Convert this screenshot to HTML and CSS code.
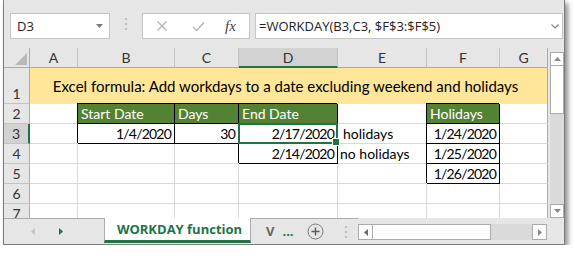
FILE: index.html
```html
<!DOCTYPE html>
<html lang="en">
<head>
    <meta charset="UTF-8">
    <title>WORKDAY function</title>
    <link rel="stylesheet" href="styles.css">
</head>
<body>
    <div class="window">
        <!-- Formula bar -->
        <div class="formula-bar">
            <div class="name-box">
                <span>D3</span>
                <svg class="caret" width="7" height="4" viewBox="0 0 7 4"><path d="M0 0h7L3.5 4z" fill="#7a7a7a"/></svg>
            </div>
            <div class="grip"><i></i><i></i><i></i></div>
            <div class="fx-box">
                <svg width="12" height="12" viewBox="0 0 12 12"><path d="M1.5 1.5l9 9M10.5 1.5l-9 9" stroke="#b4b4b4" stroke-width="1.3"/></svg>
                <svg width="13" height="11" viewBox="0 0 13 11"><path d="M1 6l3.5 3.5L12 1.5" stroke="#b4b4b4" stroke-width="1.4" fill="none"/></svg>
                <span class="fx">fx</span>
            </div>
            <div class="formula">
                <span>=WORKDAY(B3,C3, $F$3:$F$5)</span>
                <svg width="8" height="5" viewBox="0 0 8 5"><path d="M0.5 0.5L4 4l3.5-3.5" stroke="#8a8a8a" stroke-width="1.2" fill="none"/></svg>
            </div>
        </div>

        <!-- Sheet -->
        <div class="sheet">
            <div class="grid">
                <div class="corner"><svg width="12" height="12" viewBox="0 0 12 12"><path d="M12 0v12H0z" fill="#b9b9b9"/></svg></div>
                <div class="col-head">A</div>
                <div class="col-head">B</div>
                <div class="col-head">C</div>
                <div class="col-head active">D</div>
                <div class="col-head">E</div>
                <div class="col-head">F</div>
                <div class="col-head last">G</div>

                <div class="row-head">1</div>
                <div class="title">Excel formula: Add workdays to a date excluding weekend and holidays</div>

                <div class="row-head">2</div>
                <div class="cell"></div>
                <div class="cell head box">Start Date</div>
                <div class="cell head box">Days</div>
                <div class="cell head box">End Date</div>
                <div class="cell"></div>
                <div class="cell head box">Holidays</div>
                <div class="cell last"></div>

                <div class="row-head active">3</div>
                <div class="cell"></div>
                <div class="cell num box">1/4/2020</div>
                <div class="cell num box">30</div>
                <div class="cell num box selected">2/17/2020</div>
                <div class="cell indent">holidays</div>
                <div class="cell num box">1/24/2020</div>
                <div class="cell last"></div>

                <div class="row-head">4</div>
                <div class="cell"></div>
                <div class="cell"></div>
                <div class="cell"></div>
                <div class="cell num box">2/14/2020</div>
                <div class="cell">no holidays</div>
                <div class="cell num box">1/25/2020</div>
                <div class="cell last"></div>

                <div class="row-head">5</div>
                <div class="cell"></div>
                <div class="cell"></div>
                <div class="cell"></div>
                <div class="cell"></div>
                <div class="cell"></div>
                <div class="cell num box">1/26/2020</div>
                <div class="cell last"></div>

                <div class="row-head">6</div>
                <div class="cell"></div>
                <div class="cell"></div>
                <div class="cell"></div>
                <div class="cell"></div>
                <div class="cell"></div>
                <div class="cell"></div>
                <div class="cell last"></div>

                <div class="row-head">7</div>
                <div class="cell"></div>
                <div class="cell"></div>
                <div class="cell"></div>
                <div class="cell"></div>
                <div class="cell"></div>
                <div class="cell"></div>
                <div class="cell last"></div>
            </div>

            <div class="vscroll-col">
                <div class="vscroll">
                    <div class="sb-btn"><svg width="7" height="4" viewBox="0 0 7 4"><path d="M0 4h7L3.5 0z" fill="#8a8a8a"/></svg></div>
                    <div class="sb-thumb"></div>
                    <div class="sb-track"></div>
                    <div class="sb-btn"><svg width="7" height="4" viewBox="0 0 7 4"><path d="M0 0h7L3.5 4z" fill="#8a8a8a"/></svg></div>
                </div>
            </div>
        </div>

        <!-- Sheet tabs -->
        <div class="tab-bar">
            <div class="tab-nav">
                <svg width="4" height="7" viewBox="0 0 4 7"><path d="M4 0v7L0 3.5z" fill="#c4c4c4"/></svg>
                <svg width="4" height="7" viewBox="0 0 4 7"><path d="M0 0v7l4-3.5z" fill="#217346"/></svg>
            </div>
            <div class="tab active">WORKDAY function</div>
            <div class="tab more"><span class="v">V</span><span class="dots">...</span></div>
            <div class="add-sheet">
                <svg width="17" height="17" viewBox="0 0 17 17"><circle cx="8.5" cy="8.5" r="7.5" stroke="#7a7a7a" fill="none"/><path d="M8.5 4.5v8M4.5 8.5h8" stroke="#5a5a5a" stroke-width="1.4"/></svg>
            </div>
            <div class="grip tab-grip"><i></i><i></i><i></i></div>
            <div class="hscroll">
                <div class="sb-btn"><svg width="4" height="7" viewBox="0 0 4 7"><path d="M4 0v7L0 3.5z" fill="#6a6a6a"/></svg></div>
                <div class="sb-thumb"></div>
                <div class="sb-track"></div>
                <div class="sb-btn"><svg width="4" height="7" viewBox="0 0 4 7"><path d="M0 0v7l4-3.5z" fill="#8a8a8a"/></svg></div>
            </div>
        </div>
    </div>
</body>
</html>
```

FILE: styles.css
```css
/* Reset */
* {
    box-sizing: border-box;
    margin: 0;
    padding: 0;
}

body {
    background: #fff;
    font-family: Lato, "Liberation Sans", sans-serif;
    color: #000;
}

/* Window frame */
.window {
    margin-left: 3px;
    width: 562px;
    height: 245px;
    border: 1px solid #7c7c7c;
    border-top: none;
    background: #e6e6e6;
    box-shadow: 3px 3px 5px rgba(0, 0, 0, 0.45);
    overflow: hidden;
}

/* Formula bar */
.formula-bar {
    height: 48px;
    display: flex;
    align-items: flex-start;
    padding-top: 13px;
    font-family: "Open Sans", "Noto Sans", sans-serif;
    font-size: 13px;
    color: #222;
}

.name-box {
    margin-left: 6px;
    width: 100px;
    height: 26px;
    background: #fff;
    border: 1px solid #c6c6c6;
    display: flex;
    align-items: center;
    justify-content: space-between;
    padding: 0 6px 0 6px;
}

.grip {
    display: flex;
    flex-direction: column;
    gap: 3px;
    padding-top: 5px;
}

.grip i {
    display: block;
    width: 2px;
    height: 2px;
    background: #bdbdbd;
}

.formula-bar .grip {
    margin: 0 15px 0 15px;
}

.fx-box {
    width: 108px;
    height: 26px;
    background: #fff;
    border: 1px solid #c6c6c6;
    display: flex;
    align-items: center;
    padding-left: 13px;
    gap: 24px;
}

.fx {
    font-family: "Liberation Serif", serif;
    font-style: italic;
    font-size: 15px;
    color: #444;
    margin-left: -4px;
}

.formula {
    flex: 1;
    margin-left: 5px;
    margin-right: 1px;
    height: 26px;
    background: #fff;
    border: 1px solid #c6c6c6;
    display: flex;
    align-items: center;
    justify-content: space-between;
    padding: 0 3px 0 3px;
}

/* Sheet grid */
.sheet {
    display: flex;
    height: 170px;
}

.grid {
    width: 544px;
    height: 170px;
    overflow: hidden;
    display: grid;
    grid-template-columns: 26px 48px 97px 64px 99px 89px 73px 48px;
    grid-template-rows: 20px 36px repeat(6, 20px);
    background: #fff;
    font-size: 14px;
}

.corner {
    background: #e6e6e6;
    border-right: 1px solid #ababab;
    border-bottom: 1px solid #ababab;
    display: flex;
    align-items: flex-end;
    justify-content: flex-end;
    padding: 0 2px 2px 0;
}

.col-head {
    background: #e6e6e6;
    border-right: 1px solid #c3c3c3;
    border-bottom: 1px solid #ababab;
    display: flex;
    align-items: center;
    justify-content: center;
    color: #333;
    font-size: 14px;
}

.col-head.active {
    background: #d2d2d2;
    border-bottom: 2px solid #217346;
}

.col-head.last {
    border-right-color: #ababab;
}

.row-head {
    background: #e6e6e6;
    border-right: 1px solid #ababab;
    border-bottom: 1px solid #c3c3c3;
    display: flex;
    align-items: flex-end;
    justify-content: center;
    color: #333;
    padding-bottom: 1px;
    line-height: 17px;
}

.row-head.active {
    background: #d2d2d2;
    border-right: 2px solid #217346;
}

.title {
    grid-column: 2 / span 7;
    background: #ffe699;
    border-right: 1px solid #ababab;
    display: flex;
    align-items: center;
    justify-content: center;
    font-size: 15px;
    padding-right: 6px;
}

.cell {
    border-right: 1px solid #d9d9d9;
    border-bottom: 1px solid #d9d9d9;
    display: flex;
    align-items: flex-end;
    padding: 0 2px 1px 2px;
    line-height: 17px;
    white-space: nowrap;
}

.cell.last {
    border-right-color: #ababab;
}

.cell.num {
    justify-content: flex-end;
    letter-spacing: -0.8px;
    padding-right: 3px;
}

.cell.indent {
    padding-left: 5px;
}

.cell.box {
    border-right-color: #000;
    border-bottom-color: #000;
    box-shadow: -1px -1px 0 #000;
}

.cell.head {
    background: #548235;
    color: #fff;
    padding-left: 3px;
}

/* Active cell outline with fill handle */
.cell.selected {
    position: relative;
}

.cell.selected::after {
    content: "";
    position: absolute;
    top: -1px;
    left: -1px;
    right: -1px;
    bottom: -1px;
    border: 2px solid #217346;
}

.cell.selected::before {
    content: "";
    position: absolute;
    right: -3px;
    bottom: -3px;
    width: 6px;
    height: 6px;
    background: #217346;
    border: 1px solid #fff;
    z-index: 1;
}

/* Scrollbars */
.vscroll-col {
    width: 16px;
    padding: 4px 0 0 2px;
}

.vscroll {
    height: 166px;
    width: 14px;
    display: flex;
    flex-direction: column;
    background: #dadada;
}

.sb-btn {
    background: #fff;
    border: 1px solid #ababab;
    display: flex;
    align-items: center;
    justify-content: center;
}

.vscroll .sb-btn {
    height: 14px;
}

.vscroll .sb-thumb {
    height: 48px;
    background: #fff;
    border: 1px solid #ababab;
    border-top: none;
}

.sb-track {
    flex: 1;
}

/* Tab bar */
.tab-bar {
    height: 26px;
    display: flex;
    align-items: flex-start;
    font-family: "Open Sans", "Noto Sans", sans-serif;
    font-size: 13px;
}

.tab-nav {
    width: 100px;
    height: 25px;
    border-top: 1px solid #ababab;
    display: flex;
    align-items: center;
    padding-left: 27px;
    gap: 24px;
}

.tab {
    height: 25px;
    display: flex;
    align-items: center;
}

.tab.active {
    width: 147px;
    background: #fff;
    border-left: 1px solid #ababab;
    border-right: 1px solid #ababab;
    border-bottom: 3px solid #217346;
    justify-content: center;
    font-weight: bold;
    color: #217346;
    padding: 0 0 1px 4px;
}

.tab.more {
    width: 52px;
    border-top: 1px solid #ababab;
    padding-left: 15px;
    color: #666;
    font-weight: bold;
}

.tab.more .dots {
    color: #217346;
    margin-left: 8px;
}

.add-sheet {
    width: 30px;
    height: 25px;
    border-top: 1px solid #ababab;
    display: flex;
    align-items: center;
    padding-left: 4px;
}

.tab-grip {
    width: 25px;
    height: 25px;
    border-top: 1px solid #ababab;
    align-items: center;
    padding-top: 7px;
}

.hscroll {
    margin-top: 6px;
    width: 189px;
    height: 16px;
    display: flex;
    background: #dadada;
}

.hscroll .sb-btn {
    width: 15px;
}

.hscroll .sb-thumb {
    width: 118px;
    background: #fff;
    border: 1px solid #ababab;
    border-left: none;
}
```
